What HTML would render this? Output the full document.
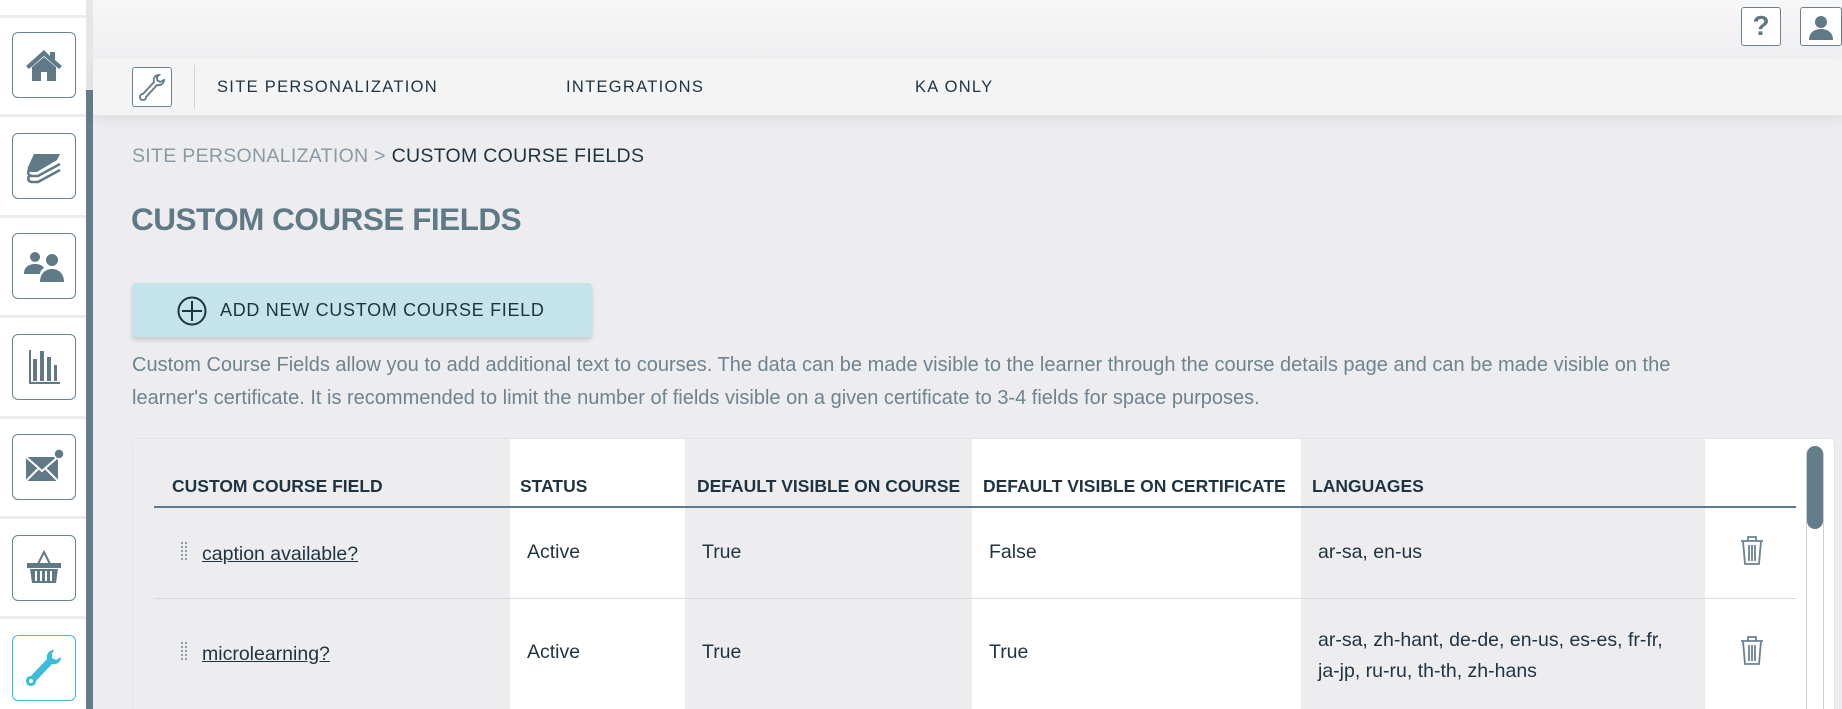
<!DOCTYPE html>
<html><head><meta charset="utf-8"><style>
*{margin:0;padding:0;box-sizing:border-box}
html{width:1842px;height:709px;overflow:hidden}
body{width:1842px;height:709px;overflow:hidden;background:#ededf0;font-family:"Liberation Sans",sans-serif;position:relative;color:#1f3340}
.a{position:absolute}
.sb{left:0;top:0;width:86px;height:709px;background:#fff}
.sep{left:0;width:86px;height:3px;background:#ececee}
.ib{left:12px;width:64px;height:66px;border:1.5px solid #6b8290;border-radius:6px;background:#fff;display:flex;align-items:center;justify-content:center}
.nav{font-size:16.5px;letter-spacing:1.3px;color:#1f3340;top:78px}
.th{top:476px;font-size:17.5px;font-weight:bold;color:#1f3340}
.td{font-size:19.5px;color:#1f3340}
.dots{width:8px;height:20px;background-image:radial-gradient(circle,#8a9aa3 1px,transparent 1.3px);background-size:4px 4px}
</style></head><body>
<div class="a sb"></div>
<div class="a" style="left:86px;top:0;width:7px;height:90px;background:#e6e6e8;border-radius:3px"></div>
<div class="a" style="left:86px;top:90px;width:7px;height:619px;background:#637e8a"></div>
<div class="a sep" style="top:15px"></div><div class="a sep" style="top:114px"></div><div class="a sep" style="top:215px"></div><div class="a sep" style="top:315px"></div><div class="a sep" style="top:416px"></div><div class="a sep" style="top:516px"></div><div class="a sep" style="top:616px"></div>
<div class="a ib" style="top:32px"><svg width="40" height="36" viewBox="0 0 40 36"><path d="M20 3L2 19l3 3 15-13 15 13 3-3-7-6V5h-5v4z" fill="#5f7a86"/><path d="M8 20v14h9v-9h6v9h9V20L20 10z" fill="#5f7a86"/></svg></div>
<div class="a ib" style="top:133px"><svg width="40" height="40" viewBox="0 0 40 40"><path d="M10 8h26l-3 6-20 12H7c-3 0-4-2-3-5z" fill="#5f7a86"/><path d="M5 24c-2 3 0 6 3 6h6l22-12M5 30c-2 3 0 6 3 6h6l22-12" stroke="#5f7a86" stroke-width="2.5" fill="none"/></svg></div>
<div class="a ib" style="top:233px"><svg width="44" height="36" viewBox="0 0 44 36"><circle cx="13" cy="9" r="5" fill="#5f7a86"/><circle cx="30" cy="12" r="6" fill="#5f7a86"/><path d="M2 26c0-8 6-10 11-10 4 0 7 1 9 4-3 2-4 4-4 6z" fill="#5f7a86"/><path d="M18 34c0-9 6-13 12-13s12 4 12 13z" fill="#5f7a86"/></svg></div>
<div class="a ib" style="top:334px"><svg width="40" height="40" viewBox="0 0 40 40"><rect x="9" y="12" width="4" height="22" fill="#5f7a86"/><rect x="16" y="4" width="4" height="30" fill="#5f7a86"/><rect x="23" y="10" width="4" height="24" fill="#5f7a86"/><rect x="30" y="18" width="3" height="16" fill="#5f7a86"/><path d="M6 3v33h30" stroke="#5f7a86" stroke-width="2" fill="none"/></svg></div>
<div class="a ib" style="top:434px"><svg width="44" height="40" viewBox="0 0 44 40"><rect x="4" y="10" width="32" height="24" fill="#5f7a86"/><path d="M4 10l16 14 16-14M4 34l12-12M36 34L24 22" stroke="#fff" stroke-width="2" fill="none"/><circle cx="37" cy="7" r="5" fill="#5f7a86" stroke="#fff" stroke-width="1.5"/></svg></div>
<div class="a ib" style="top:535px"><svg width="40" height="40" viewBox="0 0 40 40"><path d="M14 16l6-12 6 12" stroke="#5f7a86" stroke-width="2" fill="none"/><rect x="3" y="15" width="34" height="5" fill="#5f7a86"/><path d="M6 21h28l-2 14H8z" fill="#5f7a86"/><path d="M12 23v10M17 23v10M22 23v10M27 23v10" stroke="#fff" stroke-width="2"/></svg></div>
<div class="a ib" style="top:635px;border-color:#3bbcd8"><svg width="40" height="44" viewBox="0 0 40 44"><path d="M30 4c-5 0-8 4-7 9L7 30c-3 0-5 2-5 5s2 5 5 5 5-2 5-5l16-17c5 1 9-2 9-7l-5 3-4-2v-4z" fill="#3bbcd8"/><circle cx="7" cy="35" r="2" fill="#fff"/></svg></div>
<div class="a" style="left:93px;top:0;width:1749px;height:59px;background:linear-gradient(#f7f7f8,#efeff1)"></div>
<div class="a" style="left:1741px;top:7px;width:40px;height:39px;border:1.5px solid #6b8290;border-radius:3px;background:#fff;text-align:center;font-size:28px;font-weight:bold;color:#5f7a86;line-height:36px">?</div>
<div class="a" style="left:1800px;top:7px;width:42px;height:39px;border:1.5px solid #6b8290;border-radius:3px;background:#fff;display:flex;align-items:center;justify-content:center"><svg width="26" height="26" viewBox="0 0 26 26"><circle cx="13" cy="8" r="6" fill="#5f7a86"/><path d="M1 26c0-8 6-11 12-11s12 3 12 11z" fill="#5f7a86"/></svg></div>
<div class="a" style="left:93px;top:59px;width:1749px;height:56px;background:#f4f4f5;box-shadow:0 5px 10px rgba(0,0,0,.06)"></div>
<div class="a" style="left:132px;top:67px;width:40px;height:40px;border:1.5px solid #6b8290;border-radius:3px;background:#fff;display:flex;align-items:center;justify-content:center"><svg width="28" height="28" viewBox="0 0 28 28"><path d="M21 2c-4 0-6 3-5 7L5 21c-2 0-3 1-3 3s1 3 3 3 3-1 3-3L19 12c4 1 7-2 7-5l-4 2-3-2V4z" fill="none" stroke="#5f7a86" stroke-width="1.8"/></svg></div>
<div class="a" style="left:194px;top:65px;width:1px;height:44px;background:#d2d5d8"></div>
<div class="a nav" style="left:217px">SITE PERSONALIZATION</div>
<div class="a nav" style="left:566px">INTEGRATIONS</div>
<div class="a nav" style="left:915px">KA ONLY</div>
<div class="a" style="left:132px;top:145px;font-size:19.5px;color:#8a9aa3;letter-spacing:.3px">SITE PERSONALIZATION <span style="color:#8a9aa3">&gt;</span> <span style="color:#1f3340">CUSTOM COURSE FIELDS</span></div>
<div class="a" style="left:131px;top:201px;font-size:31.5px;font-weight:bold;color:#5f7a86;letter-spacing:-.5px">CUSTOM COURSE FIELDS</div>
<div class="a" style="left:132px;top:283px;width:460px;height:54px;background:#c5e3ea;border-radius:4px;box-shadow:0 3px 5px rgba(0,0,0,.15)"></div>
<svg class="a" style="left:177px;top:296px" width="30" height="30" viewBox="0 0 30 30"><circle cx="15" cy="15" r="13.5" fill="none" stroke="#1f3340" stroke-width="2"/><path d="M15 5v20M5 15h20" stroke="#1f3340" stroke-width="2"/></svg>
<div class="a" style="left:220px;top:300px;font-size:18px;color:#1f3340;letter-spacing:.7px">ADD NEW CUSTOM COURSE FIELD</div>
<div class="a" style="left:132px;top:349px;width:1640px;font-size:20px;line-height:33px;color:#6e838e">Custom Course Fields allow you to add additional text to courses. The data can be made visible to the learner through the course details page and can be made visible on the<br>learner's certificate. It is recommended to limit the number of fields visible on a given certificate to 3-4 fields for space purposes.</div>
<div class="a" style="left:132px;top:438px;width:1703px;height:271px;background:#fff;border:1px solid #e2e3e6;border-bottom:none;border-radius:5px 5px 0 0"></div>
<div class="a" style="left:133px;top:439px;width:377px;height:270px;background:#ededf0"></div>
<div class="a" style="left:685px;top:439px;width:287px;height:270px;background:#ededf0"></div>
<div class="a" style="left:1301px;top:439px;width:404px;height:270px;background:#ededf0"></div>
<div class="a" style="left:1806px;top:446px;width:18px;height:263px;border:1px solid #c9cfd3;border-bottom:none;border-radius:9px 9px 0 0"></div>
<div class="a" style="left:1807px;top:446px;width:16px;height:83px;background:#637e8a;border-radius:8px"></div>
<div class="a th" style="left:172px">CUSTOM COURSE FIELD</div>
<div class="a th" style="left:520px">STATUS</div>
<div class="a th" style="left:697px">DEFAULT VISIBLE ON COURSE</div>
<div class="a th" style="left:983px">DEFAULT VISIBLE ON CERTIFICATE</div>
<div class="a th" style="left:1312px">LANGUAGES</div>
<div class="a" style="left:154px;top:506px;width:1642px;height:2px;background:#5f7a86"></div>
<div class="a" style="left:154px;top:598px;width:1642px;height:1px;background:#d8dadd"></div>
<div class="a dots" style="left:180px;top:541px"></div>
<div class="a dots" style="left:180px;top:641px"></div>
<div class="a td" style="left:202px;top:543px;text-decoration:underline">caption available?</div>
<div class="a td" style="left:527px;top:541px">Active</div>
<div class="a td" style="left:702px;top:541px">True</div>
<div class="a td" style="left:989px;top:541px">False</div>
<div class="a td" style="left:1318px;top:541px">ar-sa, en-us</div>
<div class="a td" style="left:202px;top:643px;text-decoration:underline">microlearning?</div>
<div class="a td" style="left:527px;top:641px">Active</div>
<div class="a td" style="left:702px;top:641px">True</div>
<div class="a td" style="left:989px;top:641px">True</div>
<div class="a td" style="left:1318px;top:625px;line-height:31px">ar-sa, zh-hant, de-de, en-us, es-es, fr-fr,<br>ja-jp, ru-ru, th-th, zh-hans</div>
<svg class="a" style="left:1739px;top:534px" width="26" height="32" viewBox="0 0 26 32"><path d="M2 7h22M9 7V3h8v4M4 7l2 23h14l2-23M10 11v16M13 11v16M16 11v16" stroke="#6b8290" stroke-width="1.8" fill="none"/></svg>
<svg class="a" style="left:1739px;top:634px" width="26" height="32" viewBox="0 0 26 32"><path d="M2 7h22M9 7V3h8v4M4 7l2 23h14l2-23M10 11v16M13 11v16M16 11v16" stroke="#6b8290" stroke-width="1.8" fill="none"/></svg>
</body></html>
